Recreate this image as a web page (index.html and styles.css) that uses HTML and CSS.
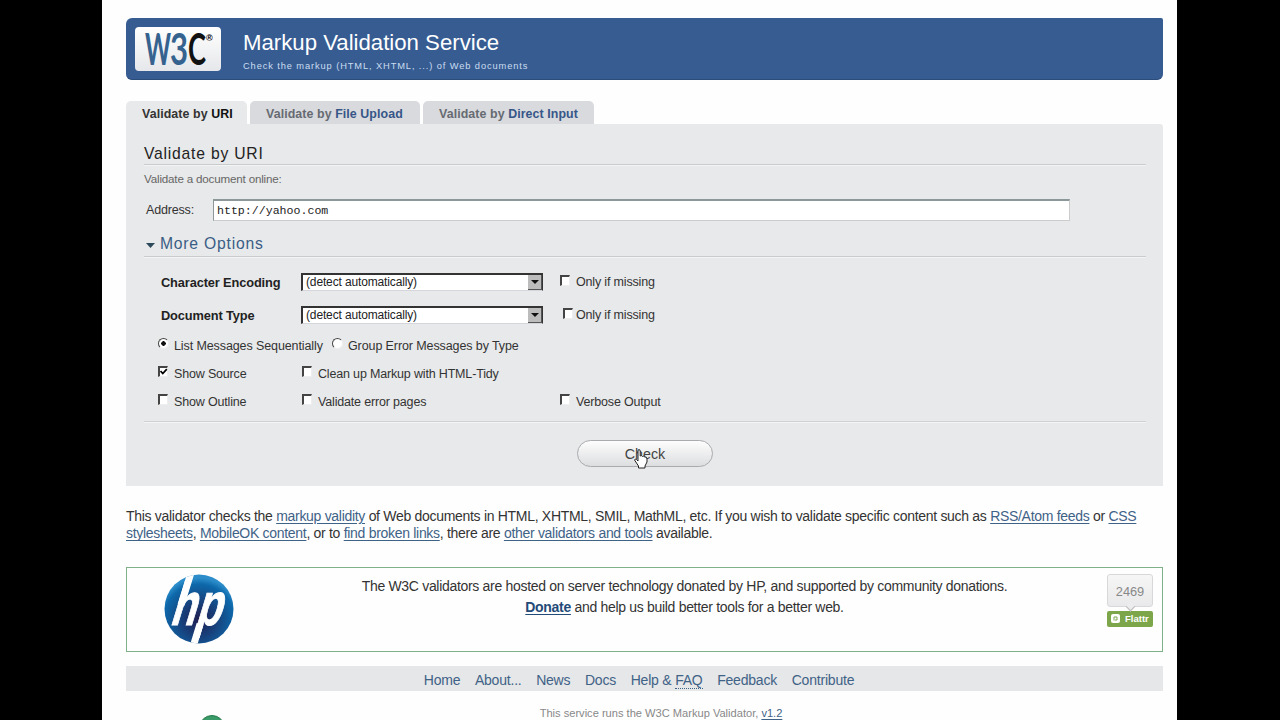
FILE: index.html
```
<!DOCTYPE html>
<html lang="en">
<head>
    <meta charset="UTF-8">
    <title>The W3C Markup Validation Service</title>
    <link rel="stylesheet" href="styles.css">
</head>
<body>

    <div class="page">
        <!-- Banner -->
        <div class="banner">
            <svg class="w3c-logo" width="86" height="44" viewBox="0 0 86 44">
                <defs>
                    <linearGradient id="plate" x1="0" y1="0" x2="0" y2="1">
                        <stop offset="0" stop-color="#ffffff"/>
                        <stop offset="1" stop-color="#e6e7ea"/>
                    </linearGradient>
                </defs>
                <rect width="86" height="44" rx="4" fill="url(#plate)"/>
                <text class="logo-w" x="10" y="38" textLength="26" lengthAdjust="spacingAndGlyphs">W</text>
                <text class="logo-w" x="35" y="38" textLength="18" lengthAdjust="spacingAndGlyphs">3</text>
                <text class="logo-c" x="53" y="38" textLength="18" lengthAdjust="spacingAndGlyphs">C</text>
                <text class="logo-r" x="71" y="14">®</text>
            </svg>
            <div>
                <h1>Markup Validation Service</h1>
                <p class="tagline">Check the markup (HTML, XHTML, ...) of Web documents</p>
            </div>
        </div>

        <!-- Tabs -->
        <ul class="tabs">
            <li class="tab-uri selected">Validate by <span>URI</span></li>
            <li class="tab-upload">Validate by <span>File Upload</span></li>
            <li class="tab-direct">Validate by <span>Direct Input</span></li>
        </ul>

        <!-- Validation form -->
        <form class="panel">
            <h2>Validate by URI</h2>
            <p class="instructions">Validate a document online:</p>
            <div class="address">
                <label for="uri">Address:</label>
                <input type="text" id="uri" value="http://yahoo.com">
            </div>
            <h2 class="more">
                <svg width="9" height="5" viewBox="0 0 9 5"><path d="M0 0h9L4.500 5z" fill="#2d4a5c"/></svg>
                More Options
            </h2>

            <div class="options">
                <div class="row tall">
                    <strong class="col-a">Character Encoding</strong>
                    <div class="col-b"><div class="select"><span>(detect automatically)</span><i></i></div></div>
                    <label><b class="box"></b>Only if missing</label>
                </div>
                <div class="row tall">
                    <strong class="col-a">Document Type</strong>
                    <div class="col-b"><div class="select"><span>(detect automatically)</span><i></i></div></div>
                    <label><b class="box nudge"></b>Only if missing</label>
                </div>
                <div class="row radios">
                    <label class="radio-first"><b class="radio on"></b>List Messages Sequentially</label>
                    <label><b class="radio"></b>Group Error Messages by Type</label>
                </div>
                <div class="row">
                    <label class="col-a check"><b class="box">
                        <svg width="8" height="8" viewBox="0 0 8 8"><path d="M0.500 3L2.800 5.500L6.800 1.200" fill="none" stroke="#000" stroke-width="1.800"/></svg>
                    </b>Show Source</label>
                    <label class="col-b"><b class="box"></b>Clean up Markup with HTML-Tidy</label>
                </div>
                <div class="row">
                    <label class="col-a check"><b class="box"></b>Show Outline</label>
                    <label class="col-b"><b class="box"></b>Validate error pages</label>
                    <label><b class="box"></b>Verbose Output</label>
                </div>
            </div>

            <div class="submit">
                <button type="button">Check</button>
                <svg class="pointer" width="16" height="22" viewBox="0 0 16 22">
                    <path d="M5 13V3Q5 1.500 6 1.500T7.200 3V8Q8.500 7 9.500 8.500Q11 7.500 11.800 9Q14 8.500 14 11V14L12 18V20H5.500V18L1.500 12Q2 10.500 3.500 11.500L5 13" fill="#fff" stroke="#222" stroke-width="1"/>
                </svg>
            </div>
        </form>

        <p class="intro">This validator checks the <a>markup validity</a> of Web documents in HTML, XHTML, SMIL, MathML, etc. If you wish to validate specific content such as <a>RSS/Atom feeds</a> or <a>CSS</a><br><a>stylesheets</a>, <a>MobileOK content</a>, or to <a>find broken links</a>, there are <a>other validators and tools</a> available.</p>

        <!-- Donation box -->
        <div class="donate">
            <svg class="hp-logo" width="70" height="70" viewBox="0 0 70 70">
                <defs>
                    <radialGradient id="hp" cx=".5" cy=".65" r=".6">
                        <stop offset="0" stop-color="#201d50"/>
                        <stop offset=".45" stop-color="#17437e"/>
                        <stop offset=".85" stop-color="#0d68aa"/>
                        <stop offset="1" stop-color="#2c8dca"/>
                    </radialGradient>
                    <clipPath id="disc"><circle cx="35" cy="35" r="34.500"/></clipPath>
                </defs>
                <circle cx="35" cy="35" r="34.500" fill="url(#hp)"/>
                <!-- bars run the stems out to the rim of the disc -->
                <path d="M27.500 -3L17 31M36 50L29 73" stroke="#fff" stroke-width="7" clip-path="url(#disc)"/>
                <text class="hp-text" transform="translate(5 51) skewX(-17) scale(.69 1)">h</text>
                <text class="hp-text" transform="translate(30.500 51) skewX(-17) scale(.69 1)">p</text>
            </svg>
            <p>The W3C validators are hosted on server technology donated by HP, and supported by community donations.<br><a>Donate</a> and help us build better tools for a better web.</p>
            <div class="flattr">
                <div class="count">2469</div>
                <div class="flattr-button">
                    <svg width="9" height="9" viewBox="0 0 9 9"><rect width="9" height="9" rx="2" fill="#fff"/><path d="M3 6.500V3H6M6 3V6H4" fill="none" stroke="#7da64a"/></svg>
                    Flattr
                </div>
            </div>
        </div>

        <div class="nav">
            <a>Home</a><a>About...</a><a>News</a><a>Docs</a><a>Help &amp; <span>FAQ</span></a><a>Feedback</a><a>Contribute</a>
        </div>

        <div class="footer">
            <span class="badge"></span>
            <p>This service runs the W3C Markup Validator, <a>v1.2</a></p>
        </div>
    </div>

</body>
</html>
```
FILE: styles.css
```
* {
    margin: 0;
    padding: 0;
    box-sizing: border-box;
}

body {
    background-color: #000;
    color: #333;
    font-family: "Liberation Sans", Arial, sans-serif;
    height: 720px;
    overflow: hidden;
}

.page {
    width: 1075px;
    height: 720px;
    margin-left: 102px;
    padding: 18px 14px 0 24px;
    background-color: #fefefe;
    overflow: hidden;
}

/* Banner */
.banner {
    display: flex;
    height: 62px;
    padding: 9px 0 0 9px;
    background-color: #365c92;
    border-bottom: 1px solid #2c4c7c;
    border-radius: 6px 2px 6px 6px;
}

.w3c-logo {
    margin-right: 22px;
    overflow: visible;
}

.logo-w, .logo-c {
    font-family: Lato, sans-serif;
    font-size: 43px;
    fill: #35628f;
    font-weight: bold;
}

.logo-c {
    fill: #111;
}

.logo-r {
    font-size: 9px;
    font-weight: bold;
}

h1 {
    font-size: 22.2px;
    font-weight: normal;
    line-height: 32px;
    color: #fff;
}

.tagline {
    margin-top: 1px;
    font-size: 9.3px;
    line-height: 12px;
    letter-spacing: 0.89px;
    color: #cbdcf0;
}

/* Tabs */
.tabs {
    display: flex;
    gap: 3px;
    margin-top: 21px;
    list-style: none;
}

.tabs li {
    height: 23px;
    padding-left: 16px;
    font-size: 12.4px;
    font-weight: bold;
    line-height: 26px;
    letter-spacing: 0.08px;
    color: #666b72;
    background-color: #d9dade;
    border-radius: 5px 5px 0 0;
    white-space: nowrap;
}

.tabs span {
    color: #365688;
}

.tabs .selected {
    color: #333;
    background-color: #e8e9ea;
}

.selected span {
    color: #111;
}

.tab-uri {
    width: 121px;
}

.tab-upload {
    width: 170px;
}

.tab-direct {
    width: 171px;
}

/* Form panel */
.panel {
    height: 362px;
    padding: 18px 17px 0 18px;
    background-color: #e8e9ea;
    border-radius: 0 3px 0 0;
    font-size: 12.5px;
    letter-spacing: -0.17px;
}

h2 {
    height: 23px;
    font-size: 15.7px;
    font-weight: normal;
    line-height: 23px;
    letter-spacing: 0.78px;
    color: #222;
    border-bottom: 1px solid #c9cbcd;
    box-shadow: 0 1px #f3f4f4;
}

.instructions {
    margin-top: 5px;
    font-size: 11.6px;
    line-height: 17px;
    color: #666;
}

.address {
    display: flex;
    margin-top: 12px;
    padding-left: 2px;
    line-height: 22px;
}

.address label {
    width: 67px;
}

.address input {
    width: 857px;
    height: 22px;
    padding: 0 3px;
    font-family: "Liberation Mono", monospace;
    font-size: 11.6px;
    color: #222;
    background-color: #fff;
    border: 1px solid #ccc;
    border-top: 2px solid #8b9798;
    border-left-color: #8b9798;
}

.more {
    display: flex;
    align-items: center;
    gap: 5px;
    margin-top: 13px;
    padding: 0 0 3px 2px;
    color: #3a5d85;
}

.more svg {
    margin-top: 4px;
}

.options {
    height: 165px;
    padding-top: 9px;
    border-bottom: 1px solid #cfd1d3;
    box-shadow: 0 1px #f3f4f4;
}

.row {
    display: flex;
    align-items: center;
    height: 27.8px;
    padding-left: 14px;
}

.row.tall {
    height: 32.8px;
}

.row.radios {
    margin-top: 0.5px;
    letter-spacing: -0.1px;
}

.row label {
    display: flex;
    align-items: center;
}

.col-a {
    width: 143px;
}

strong.col-a {
    padding-left: 3px;
    font-size: 12.8px;
    letter-spacing: -0.12px;
    color: #222;
}

.col-b {
    width: 258px;
}

.row .radio-first {
    width: 174px;
}

.select {
    display: flex;
    justify-content: space-between;
    width: 242px;
    height: 18px;
    padding-left: 3px;
    font-size: 12px;
    line-height: 15px;
    letter-spacing: -0.14px;
    color: #222;
    background-color: #fff;
    border: 2px solid #333;
    border-bottom: 1px solid #d5d5dc;
    border-right-width: 1px;
}

.select i {
    width: 14px;
    background-color: #bcbcbc;
    border-right: 1px solid #555;
    border-bottom: 1px solid #555;
}

.select i::before {
    content: "";
    display: block;
    margin: 5px 0 0 3px;
    width: 0;
    border: 4px solid transparent;
    border-top-color: #111;
    border-bottom: none;
}

.box {
    width: 10px;
    height: 11px;
    margin: -4px 6px 0 1px;
    background-color: #fff;
    border: 2px solid #444;
    border-right: 1px solid #eee;
    border-bottom: 1px solid #eee;
}

.box.nudge {
    margin-left: 4px;
    margin-right: 3px;
}

.box svg {
    display: block;
}

.check .box {
    margin-left: 0;
}

.radio {
    width: 11px;
    height: 11px;
    margin: -4px 5px 0 0;
    background-color: #fff;
    border: 1.5px solid #444;
    border-right-color: #eee;
    border-bottom-color: #eee;
    border-radius: 50%;
}

.radio.on {
    background: radial-gradient(circle, #111 2px, #fff 2.5px);
}

.submit {
    position: relative;
    display: flex;
    justify-content: center;
    padding-top: 18px;
}

button {
    width: 136px;
    height: 27px;
    font-family: inherit;
    font-size: 14.3px;
    color: #444;
    background: linear-gradient(#fdfdfd, #dddee0);
    border: 1px solid #a9abae;
    border-radius: 14px;
}

/* Mouse pointer over the button */
.pointer {
    position: absolute;
    left: 489px;
    top: 26px;
}

.intro {
    margin-top: 22px;
    font-size: 14px;
    line-height: 17.4px;
    letter-spacing: -0.3px;
    white-space: nowrap;
}

a {
    color: #3f6287;
}

.intro a, .footer a {
    text-decoration: underline;
    text-underline-offset: 2px;
}

/* Donation box */
.donate {
    display: flex;
    height: 85px;
    margin-top: 24px;
    padding: 6px 9px 0 37px;
    border: 1px solid #80b087;
}

.hp-text {
    font-size: 60px;
    font-weight: bold;
    fill: #fff;
    stroke: #fff;
    stroke-width: 1px;
}

.hp-logo {
    overflow: visible;
}

.donate p {
    flex: 1;
    padding-top: 2px;
    padding-left: 28px;
    font-size: 14px;
    line-height: 21px;
    letter-spacing: -0.31px;
    text-align: center;
}

.donate p a {
    font-weight: bold;
    color: #234a78;
    text-decoration: underline;
    text-underline-offset: 2px;
}

.flattr {
    width: 46px;
}

.count {
    position: relative;
    height: 33px;
    font-size: 12.8px;
    line-height: 34px;
    text-align: center;
    color: #888;
    background: linear-gradient(#f6f6f6, #e9e9eb);
    border: 1px solid #d8d8da;
    border-radius: 3px;
}

.count::after {
    content: "";
    position: absolute;
    left: 19px;
    bottom: -4px;
    width: 6px;
    height: 6px;
    background-color: #ececee;
    border: 1px solid #bbb;
    border-top: none;
    border-left: none;
    transform: rotate(45deg);
}

.flattr-button {
    display: flex;
    align-items: center;
    gap: 5px;
    height: 16px;
    margin-top: 4px;
    padding-left: 4px;
    font-size: 9.5px;
    font-weight: bold;
    color: #fff;
    background-color: #7da64a;
    border-radius: 2px;
}

/* Footer */
.nav {
    display: flex;
    justify-content: center;
    gap: 14.6px;
    height: 25px;
    margin-top: 14px;
    padding-right: 11px;
    font-size: 14px;
    line-height: 29px;
    letter-spacing: -0.2px;
    background-color: #e6e7e8;
}

.nav span {
    border-bottom: 1px dotted #3f6287;
}

.footer {
    position: relative;
    padding-top: 14px;
    padding-left: 33px;
    text-align: center;
    font-size: 11.1px;
    line-height: 16px;
    color: #888;
}

.badge {
    position: absolute;
    left: 73px;
    top: 24px;
    width: 26px;
    height: 26px;
    background-color: #3a9b68;
    border: 1px solid #267a4c;
    border-radius: 50%;
}
```
